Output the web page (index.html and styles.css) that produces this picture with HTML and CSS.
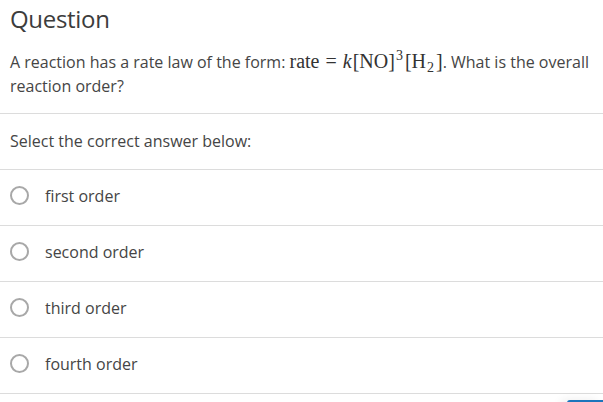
FILE: index.html
```html
<!DOCTYPE html>
<html>
<head>
<meta charset="utf-8">
<link rel="stylesheet" href="styles.css">
</head>
<body>
<div class="page">
  <h1 class="title">Question</h1>
  <p class="prompt">A reaction has a rate law of the form: <span class="math">rate<span class="eq">=</span><i>k</i>[NO]<sup>3</sup>[H<sub>2</sub>]</span>. What is the overall reaction order?</p>
  <div class="instr">Select the correct answer below:</div>
  <ul class="options">
    <li class="option"><span class="radio"></span><span class="label">first order</span></li>
    <li class="option"><span class="radio"></span><span class="label">second order</span></li>
    <li class="option"><span class="radio"></span><span class="label">third order</span></li>
    <li class="option"><span class="radio"></span><span class="label">fourth order</span></li>
  </ul>
  <div class="footer"><span class="btn"></span></div>
</div>
</body>
</html>
```
FILE: styles.css
```css
html, body { margin: 0; padding: 0; background: #fff; }
body { font-family: "Open Sans", sans-serif; color: #454545; overflow: hidden; }
.page { width: 603px; }
.title { margin: 0; padding: 4px 0 0 10px; font-size: 24px; font-weight: 400; line-height: 30px; color: #3c3c3c; letter-spacing: -0.3px; }
.prompt { margin: 0; padding: 16px 10px 15px 10px; font-size: 16px; line-height: 24px; border-bottom: 1px solid #dcdcdc; }
.math { font-family: "Liberation Serif", serif; font-size: 20px; line-height: 0; color: #333; }
.math .eq { margin: 0 6px; }
.math i { margin-right: 1px; }
.math sup { font-size: 14px; line-height: 0; vertical-align: 0; position: relative; top: -8px; margin: 0 2px 0 1px; }
.math sub { font-size: 14px; line-height: 0; vertical-align: 0; position: relative; top: 4px; margin: 0 2px 0 1px; }
.instr { padding: 0 10px; height: 55px; line-height: 55px; font-size: 16px; border-bottom: 1px solid #dcdcdc; }
.options { list-style: none; margin: 0; padding: 0; }
.option { box-sizing: border-box; display: flex; align-items: center; height: 56px; padding: 0 0 4px 10px; border-bottom: 1px solid #dcdcdc; font-size: 16px; }
.radio { width: 15px; height: 15px; border: 2px solid #a8a8a8; border-radius: 50%; margin-right: 16px; flex: none; }
.label { line-height: 20px; }
.footer { display: flex; justify-content: flex-end; padding-top: 6px; }
.btn { width: 36px; height: 10px; background: #1b75bc; border-radius: 3px 0 0 0; box-shadow: -6px 0 10px rgba(0,0,0,0.08); }
```
